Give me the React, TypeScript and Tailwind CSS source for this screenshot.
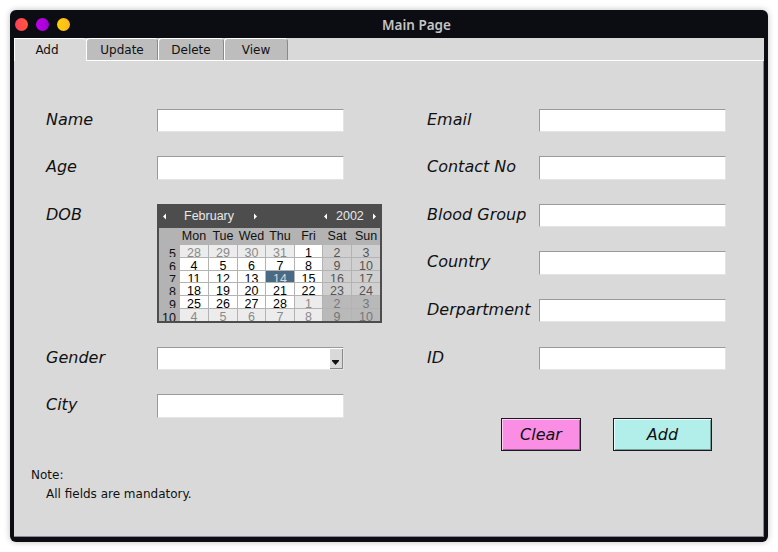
const sans = "font-['DejaVu_Sans',sans-serif]";

const days = [
  ["28", "29", "30", "31", "1", "2", "3"],
  ["4", "5", "6", "7", "8", "9", "10"],
  ["11", "12", "13", "14", "15", "16", "17"],
  ["18", "19", "20", "21", "22", "23", "24"],
  ["25", "26", "27", "28", "1", "2", "3"],
  ["4", "5", "6", "7", "8", "9", "10"],
];

const calCols = "grid-cols-[20px_28px_28px_27px_28px_27px_28px_28px]";

function Entry({ children }: { children?: React.ReactNode }) {
  return (
    <div className="relative h-[23.4px] w-[187px] border border-t-[#9a9a9a] border-l-[#9a9a9a] border-r-[#e4e4e4] border-b-[#e4e4e4] bg-white">
      {children}
    </div>
  );
}

function Row({ label, children, width }: { label: string; children?: React.ReactNode; width: string }) {
  return (
    <div className="flex items-start">
      <span className={`${width} -mt-[1px] text-[16px] leading-[24px] italic text-[#111]`}>{label}</span>
      {children ?? <Entry />}
    </div>
  );
}

function Arrow({ dir }: { dir: "left" | "right" }) {
  return (
    <svg width="5" height="7" viewBox="0 0 5 7" className="shrink-0">
      <path d={dir === "left" ? "M4 0.5v6L1 3.5z" : "M1 0.5v6L4 3.5z"} fill="#fff" />
    </svg>
  );
}

function dayClass(r: number, c: number) {
  const otherMonth = (r === 0 && c < 4) || (r === 4 && c >= 4) || r === 5;
  const weekend = c >= 5;
  if (r === 2 && c === 3) return "bg-[#4a6984] text-[#d9d9d9]";
  if (otherMonth && weekend) return "bg-[#b9b9b9] text-[#777]";
  if (otherMonth) return "bg-[#ececec] text-[#8a8a8a]";
  if (weekend) return "bg-[#d0d0d0] text-[#555]";
  return "bg-white text-black";
}

function Calendar() {
  return (
    <div className="h-[119px] w-[225px] shrink-0 overflow-hidden border-2 border-[#4d4d4d] bg-[#b3b3b3] font-['Liberation_Sans',sans-serif] text-[12.5px]">
      <div className="flex h-[22px] items-center bg-[#4d4d4d] pl-[3px]">
        <Arrow dir="left" />
        <span className="ml-[17px] w-[69px] text-[#e8e8e8]">February</span>
        <Arrow dir="right" />
        <span className="ml-[65px]"><Arrow dir="left" /></span>
        <span className="ml-[8px] text-[#e8e8e8]">2002</span>
        <span className="ml-[8px]"><Arrow dir="right" /></span>
      </div>
      <div className={`grid ${calCols} gap-x-[1px] text-center leading-[17px] text-[#111]`}>
        <span className="h-[17px]" />
        {["Mon", "Tue", "Wed", "Thu", "Fri", "Sat", "Sun"].map((d) => (
          <span key={d} className="h-[17px]">{d}</span>
        ))}
      </div>
      <div className={`grid ${calCols} grid-rows-[12px_12px_11px_12px_12px_12px] gap-[1px] text-center leading-[17px]`}>
        {days.map((week, r) => (
          <div key={r} className="contents">
            <span className="overflow-hidden pt-[3px] pr-[3px] text-right leading-[12px] text-[#111]">{r + 5}</span>
            {week.map((d, c) => (
              <span key={c} className={`overflow-hidden ${dayClass(r, c)}`}>{d}</span>
            ))}
          </div>
        ))}
      </div>
    </div>
  );
}

export default function App() {
  return (
    <div className={`h-[552px] w-[778px] overflow-hidden bg-white pt-[10px] pl-[10px] ${sans}`}>
      <div className="flex h-[532px] w-[758px] flex-col overflow-hidden rounded-md bg-[#0c0d12] shadow-[0_0_6px_rgba(0,0,0,0.25)]">
        {/* title bar */}
        <div className="flex h-[28px] shrink-0 items-center pt-[1px]">
          <div className="flex w-[55px] shrink-0 gap-[8px] pl-[5px]">
            <span className="h-[13px] w-[13px] shrink-0 rounded-full bg-gradient-to-r from-[#ff3b5c] to-[#ff5a30]" />
            <span className="h-[13px] w-[13px] shrink-0 rounded-full bg-gradient-to-r from-[#c000f0] to-[#a000d0]" />
            <span className="h-[13px] w-[13px] shrink-0 rounded-full bg-gradient-to-r from-[#ffd000] to-[#ffb820]" />
          </div>
          <div className="mt-[1px] flex-1 text-center font-['Noto_Sans',sans-serif] text-[13.5px] font-semibold text-[#c4c4c4]">Main Page</div>
        </div>

        <div className="mx-[4px] mb-[5px] flex flex-1 flex-col bg-[#d9d9d9]">
          {/* tabs */}
          <div className="flex h-[23px] shrink-0 border-b border-white text-[12px] text-[#111]">
            <div className="z-10 -mb-[1px] flex h-[23px] w-[72px] items-center justify-center rounded-tr-sm border-t border-l border-white border-r-[#8a8a8a] bg-[#d9d9d9] pr-[7px]">Add</div>
            <div className="flex h-[22px] w-[72px] items-center justify-center rounded-t-sm border-t border-l border-r border-t-white border-l-white border-r-[#8a8a8a] bg-[#bdbdbd] pt-[1px]">Update</div>
            <div className="flex h-[22px] w-[66px] items-center justify-center rounded-t-sm border-t border-l border-r border-t-white border-l-white border-r-[#8a8a8a] bg-[#bdbdbd] pt-[1px]">Delete</div>
            <div className="flex h-[22px] w-[64px] items-center justify-center rounded-t-sm border-t border-l border-r border-t-white border-l-white border-r-[#8a8a8a] bg-[#bdbdbd] pt-[1px]">View</div>
          </div>

          {/* tab page */}
          <div className="flex flex-1 flex-col border-r border-b border-[#8a8a8a] pl-[17px] pt-[47.7px]">
            <div className="flex pl-[15px]">
              <div className="flex w-[381px] shrink-0 flex-col gap-[24.2px]">
                <Row label="Name" width="w-[111px]" />
                <Row label="Age" width="w-[111px]" />
                <div className="h-[118.6px]">
                  <Row label="DOB" width="w-[111px]"><Calendar /></Row>
                </div>
                <Row label="Gender" width="w-[111px]">
                  <Entry>
                    <div className="absolute top-[1px] right-0 flex h-[20px] w-[13px] items-end justify-center border-r border-b border-[#8a8a8a] bg-[#d9d9d9] pr-[1px] pb-[3px]">
                      <svg width="7" height="5" viewBox="0 0 7 5"><path d="M0 0h7v1L3.5 5 0 1z" fill="#111" /></svg>
                    </div>
                  </Entry>
                </Row>
                <Row label="City" width="w-[111px]" />
              </div>
              <div className="flex flex-col gap-[24.2px]">
                <Row label="Email" width="w-[112px]" />
                <Row label="Contact No" width="w-[112px]" />
                <Row label="Blood Group" width="w-[112px]" />
                <Row label="Country" width="w-[112px]" />
                <Row label="Derpartment" width="w-[112px]" />
                <Row label="ID" width="w-[112px]" />
                <div className="mt-[23.8px] ml-[74px] flex gap-[32px] text-[16px] italic text-[#111]">
                  <div className="flex h-[33px] w-[80px] items-center justify-center border border-[#1a1a22] bg-[#f98ee4] pt-[1px] shadow-[inset_1px_1px_0_#ffd0f5,inset_-1px_-1px_0_#a05c92]">Clear</div>
                  <div className="flex h-[33px] w-[99px] items-center justify-center border border-[#1a1a22] bg-[#b2efea] pt-[1px] shadow-[inset_1px_1px_0_#e8fffd,inset_-1px_-1px_0_#74a09c]">Add</div>
                </div>
              </div>
            </div>
            <div className="mt-[15px] text-[12px] leading-[19px] text-[#111]">
              <div>Note:</div>
              <div className="pl-[15px]">All fields are mandatory.</div>
            </div>
          </div>
        </div>
      </div>
    </div>
  );
}
